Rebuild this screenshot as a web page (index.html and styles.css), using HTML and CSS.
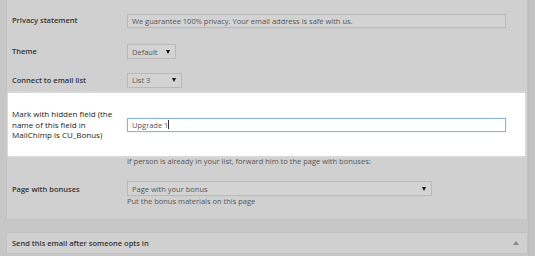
FILE: index.html
```html
<!DOCTYPE html>
<html lang="en">
<head>
    <meta charset="UTF-8">
    <title>Opt-in settings</title>
    <link rel="stylesheet" href="styles.css">
</head>
<body>
    <div class="screen">
        <div class="content">
            <div class="panel settings">
                <div class="row row-privacy">
                    <div class="label">Privacy statement</div>
                    <div class="field">
                        <div class="input wide">We guarantee 100% privacy. Your email address is safe with us.</div>
                    </div>
                </div>
                <div class="row row-theme">
                    <div class="label">Theme</div>
                    <div class="field">
                        <div class="select theme-select">Default <span class="arrow"></span></div>
                    </div>
                </div>
                <div class="row row-list">
                    <div class="label">Connect to email list</div>
                    <div class="field">
                        <div class="select list-select">List 3 <span class="arrow"></span></div>
                    </div>
                </div>
                <div class="row highlight">
                    <div class="label">Mark with hidden field (the name of this field in MailChimp is CU_Bonus)</div>
                    <div class="field">
                        <div class="input wide focused">Upgrade 1<span class="caret"></span></div>
                    </div>
                </div>
                <div class="row row-note">
                    <div></div>
                    <div class="field desc">If person is already in your list, forward him to the page with bonuses:</div>
                </div>
                <div class="row row-bonus">
                    <div class="label">Page with bonuses</div>
                    <div class="field">
                        <div class="select page-select">Page with your bonus <span class="arrow"></span></div>
                        <div class="desc">Put the bonus materials on this page</div>
                    </div>
                </div>
            </div>
            <div class="panel closed">
                <div class="panel-head">
                    <span>Send this email after someone opts in</span>
                    <span class="toggle"></span>
                </div>
            </div>
        </div>
        <div class="rail"></div>
    </div>
</body>
</html>
```

FILE: styles.css
```css
:root {
    --page: #c7c7c7;
    --panel: #d0d0d0;
    --panel-border: #c3c3c3;
    --field: #d3d3d3;
    --field-border: #b9b9b9;
    --text: #353535;
    --muted: #575757;
}

* {
    box-sizing: border-box;
}

body {
    margin: 0;
    background: var(--page);
    font-family: 'Open Sans', 'DejaVu Sans', sans-serif;
    font-size: 7.5px;
    color: var(--text);
    overflow: hidden;
}

.screen {
    display: flex;
    height: 256px;
}

.content {
    flex: 1;
    padding-left: 6px;
}

.rail {
    width: 7px;
    background: #c2c2c2;
    border-left: 1px solid #bdbdbd;
}

.panel {
    background: var(--panel);
    border: 1px solid var(--panel-border);
}

.settings {
    border-top: none;
    padding: 5px 0 12px 5px;
}

.row {
    display: grid;
    grid-template-columns: 115px 1fr;
    align-items: center;
}

.label {
    font-weight: 600;
    line-height: 10.5px;
}

.row-privacy { height: 31px; }
.row-theme { height: 31px; }
.row-list { height: 26px; }

.highlight {
    height: 63px;
    margin-left: -4px;
    margin-right: 2px;
    padding-left: 4px;
    background: #fff;
    box-shadow: 0 0 3px rgba(255, 255, 255, 0.6);
}

.highlight .label {
    padding-top: 1px;
    width: 102px;
    font-size: 8px;
    font-weight: 400;
    color: #222;
}

.row-note {
    height: 11px;
}

.row-bonus {
    padding-top: 14px;
    align-items: start;
}

.row-bonus .label {
    padding-top: 3px;
}

.input,
.select {
    height: 14px;
    line-height: 12px;
    border: 1px solid var(--field-border);
    background: var(--field);
    color: var(--muted);
    padding: 0 4px;
    white-space: nowrap;
    overflow: hidden;
}

.wide {
    width: 379px;
}

.focused {
    background: #fff;
    border-color: #8db3d5;
    color: #555;
    box-shadow: 0 0 2px rgba(120, 170, 210, 0.35);
}

.caret {
    display: inline-block;
    width: 1px;
    height: 9px;
    background: #333;
    vertical-align: -1px;
}

.select {
    display: flex;
    align-items: center;
    justify-content: space-between;
    height: 15px;
}

.theme-select { width: 49px; }
.list-select { width: 55px; }
.page-select { width: 305px; }

.arrow {
    width: 0;
    height: 0;
    border-left: 2.5px solid transparent;
    border-right: 2.5px solid transparent;
    border-top: 4px solid #111;
    margin-right: 1px;
}

.desc {
    color: var(--muted);
    line-height: 11px;
}

.closed {
    margin-top: 12px;
    border-bottom: none;
}

.panel-head {
    display: flex;
    justify-content: space-between;
    align-items: center;
    height: 21px;
    padding: 0 8px 0 5px;
    font-weight: 600;
    border-bottom: 1px solid var(--panel-border);
}

.toggle {
    width: 0;
    height: 0;
    border-left: 3px solid transparent;
    border-right: 3px solid transparent;
    border-bottom: 4px solid #8a8a8a;
}
```
